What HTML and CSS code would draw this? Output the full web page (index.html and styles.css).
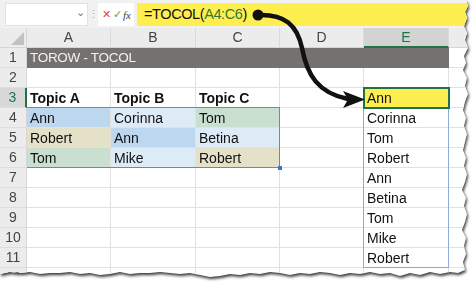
FILE: index.html
```html
<!DOCTYPE html>
<html>
<head>
<meta charset="utf-8">
<link rel="stylesheet" href="styles.css">
</head>
<body>
<div class="shadow">
  <div class="page">
    <div class="fbar">
      <div class="namebox"><span class="chev">&#8964;</span></div>
      <div class="dots">&#8942;</div>
      <div class="fxbox"><span class="x">&#10005;</span><span class="ok">&#10003;</span><span class="fx">fx</span></div>
      <div class="formula">=TOCOL(<span class="ref">A4:C6</span>)</div>
    </div>
    <div class="sheet">
      <div class="corner"><span class="tri"></span></div>
      <div class="ch">A</div><div class="ch">B</div><div class="ch">C</div><div class="ch">D</div><div class="ch sel">E</div><div class="ch"></div>

      <div class="rh">1</div><div class="c title">TOROW - TOCOL</div><div class="c"></div>
      <div class="rh">2</div><div class="c"></div><div class="c"></div><div class="c"></div><div class="c"></div><div class="c"></div><div class="c"></div>
      <div class="rh sel">3</div><div class="c b tb">Topic A</div><div class="c b tb">Topic B</div><div class="c b tb">Topic C</div><div class="c"></div><div class="c yel">Ann</div><div class="c"></div>
      <div class="rh">4</div><div class="c blue">Ann</div><div class="c lblue">Corinna</div><div class="c green">Tom</div><div class="c"></div><div class="c">Corinna</div><div class="c"></div>
      <div class="rh">5</div><div class="c beige">Robert</div><div class="c blue">Ann</div><div class="c lblue">Betina</div><div class="c"></div><div class="c">Tom</div><div class="c"></div>
      <div class="rh">6</div><div class="c green">Tom</div><div class="c lblue">Mike</div><div class="c beige">Robert</div><div class="c"></div><div class="c">Robert</div><div class="c"></div>
      <div class="rh">7</div><div class="c"></div><div class="c"></div><div class="c"></div><div class="c"></div><div class="c">Ann</div><div class="c"></div>
      <div class="rh">8</div><div class="c"></div><div class="c"></div><div class="c"></div><div class="c"></div><div class="c">Betina</div><div class="c"></div>
      <div class="rh">9</div><div class="c"></div><div class="c"></div><div class="c"></div><div class="c"></div><div class="c">Tom</div><div class="c"></div>
      <div class="rh">10</div><div class="c"></div><div class="c"></div><div class="c"></div><div class="c"></div><div class="c">Mike</div><div class="c"></div>
      <div class="rh">11</div><div class="c"></div><div class="c"></div><div class="c"></div><div class="c"></div><div class="c">Robert</div><div class="c"></div>
      <div class="rh">12</div><div class="c"></div><div class="c"></div><div class="c"></div><div class="c"></div><div class="c"></div><div class="c"></div>

      <div class="ov tbl"><span class="handle"></span></div>
      <div class="ov spill"></div>
      <div class="ov active"></div>
    </div>
  </div>
</div>
<svg class="arrow" width="474" height="284" viewBox="0 0 474 284">
  <circle cx="258" cy="15" r="5.5" fill="#111"/>
  <path d="M258 15 C 285 14, 297 25, 302 48 C 307 75, 318 93, 348 99" fill="none" stroke="#111" stroke-width="4.5" stroke-linecap="round"/>
  <polygon points="343,91 365,99.5 343,108 348,99.5" fill="#111"/>
</svg>
</body>
</html>
```

FILE: styles.css
```css
* { box-sizing: border-box; }
html, body { margin: 0; padding: 0; background: #fff; }
body { width: 474px; height: 284px; overflow: hidden; position: relative; font-family: "Liberation Sans", Arial, sans-serif; }

.shadow { filter: drop-shadow(1px 2px 1.5px rgba(0,0,0,0.8)); width: 474px; height: 284px; }
.page {
  width: 474px; height: 284px; background: #fff;
  clip-path: polygon(0 0, 466px 0, 468px 6px, 465px 12px, 467px 18px, 464px 26px, 467px 33px, 465px 40px, 468px 48px, 464px 56px, 466px 63px, 463px 70px, 467px 78px, 465px 86px, 468px 94px, 465px 102px, 463px 110px, 466px 118px, 464px 126px, 467px 134px, 465px 142px, 463px 150px, 466px 158px, 464px 166px, 467px 174px, 465px 182px, 462px 190px, 466px 198px, 464px 206px, 467px 214px, 465px 222px, 462px 230px, 466px 238px, 464px 246px, 466px 254px, 463px 262px, 465px 270px, 458px 273px, 450px 272px, 440px 274px, 430px 272px, 420px 275px, 410px 273px, 400px 276px, 390px 273px, 380px 274px, 370px 272px, 360px 274px, 350px 273px, 340px 275px, 330px 273px, 320px 272px, 310px 274px, 300px 273px, 290px 275px, 280px 273px, 270px 272px, 260px 274px, 250px 273px, 240px 275px, 230px 274px, 220px 276px, 210px 277px, 200px 275px, 190px 273px, 180px 274px, 170px 273px, 160px 272px, 150px 273px, 140px 273px, 130px 274px, 120px 272px, 110px 274px, 100px 275px, 90px 273px, 80px 274px, 70px 272px, 60px 273px, 50px 273px, 40px 274px, 30px 272px, 20px 273px, 10px 272px, 0 274px);
}

.fbar { height: 28px; background: #f1f1f1; display: flex; align-items: flex-start; padding-top: 3px; }
.namebox { margin-left: 5px; width: 83px; height: 23px; background: #fff; border: 1px solid #e2e2e2; display: flex; justify-content: flex-end; align-items: center; padding-right: 2px; }
.chev { font-size: 11px; color: #777; line-height: 1; margin-top: -4px; }
.dots { width: 10px; text-align: center; color: #aaa; font-size: 11px; line-height: 23px; }
.fxbox { width: 36px; height: 23px; background: #fff; display: flex; align-items: center; justify-content: space-between; padding: 0 3px 0 4px; font-size: 11px; }
.x { color: #e04545; font-size: 11px; }
.ok { color: #56a85e; font-size: 11px; }
.fx { font-family: "Liberation Serif", serif; font-style: italic; color: #444; font-size: 11px; }
.formula { margin-left: 3px; flex: 1; height: 23px; background: #ffee50; font-size: 14.5px; letter-spacing: -0.4px; line-height: 23px; padding-left: 7px; color: #111; }
.ref { color: #2f7a34; }

.sheet { position: relative; display: grid; grid-template-columns: 27px 84px 85px 84px 84px 85px 1fr; grid-auto-rows: 20px; font-size: 14px; }
.corner { background: #ececec; border-right: 1px solid #d6d6d6; border-bottom: 1px solid #d6d6d6; display: flex; justify-content: flex-end; align-items: flex-end; padding: 0 2px 2px 0; }
.tri { width: 0; height: 0; border-left: 13px solid transparent; border-bottom: 13px solid #c2c2c2; }
.ch { background: #ececec; border-right: 1px solid #dadada; border-bottom: 1px solid #d6d6d6; color: #444; text-align: center; line-height: 19px; font-size: 14px; }
.ch.sel { background: #d3d3d3; border-bottom: 2px solid #217346; color: #217346; }
.rh { background: #ececec; border-right: 1px solid #d6d6d6; border-bottom: 1px solid #dedede; color: #444; text-align: center; line-height: 19px; font-size: 14px; }
.rh.sel { background: #d8d8d8; color: #217346; border-right: 2px solid #217346; }
.c { border-right: 1px solid #e1e1e1; border-bottom: 1px solid #e1e1e1; padding-left: 3px; line-height: 20px; color: #111; white-space: nowrap; }
.c.b { font-weight: bold; }
.c.tb { border-bottom-color: #5b8ad6; }
.title { grid-column: 2 / 7; background: #767171; color: #f3f3f3; border-right: none; border-bottom-color: #767171; font-size: 13.5px; letter-spacing: -0.3px; }
.blue { background: #bdd7ee; }
.lblue { background: #ddebf7; }
.green { background: #c9dfd0; }
.beige { background: #e5e1c8; }
.yel { background: #ffee50; }

.ov { position: absolute; pointer-events: none; }
.tbl { grid-column: 2 / 5; grid-row: 5 / 8; left: 0; right: 0; top: -1px; bottom: 0; border: 1px solid #5b8ad6; border-left: none; }
.handle { position: absolute; right: -3px; bottom: -3px; width: 4px; height: 4px; background: #4472c4; }
.spill { grid-column: 6 / 7; grid-row: 4 / 13; left: -1px; right: 0; top: -1px; bottom: 0; border: 1px solid #8eaadb; }
.active { grid-column: 6 / 7; grid-row: 4 / 5; left: -1px; right: -1px; top: -1px; bottom: -1px; border: 2px solid #217346; }

.arrow { position: absolute; left: 0; top: 0; pointer-events: none; }
```
